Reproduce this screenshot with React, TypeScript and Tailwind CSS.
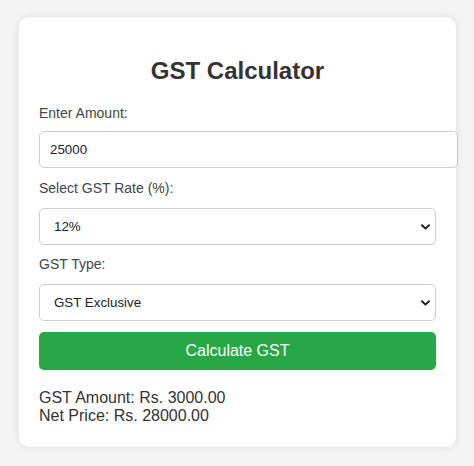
import React from "react";

function Chevron() {
  return (
    <svg
      className="pointer-events-none absolute right-[6px] top-1/2 -translate-y-1/2"
      width="9"
      height="6"
      viewBox="0 0 9 6"
      fill="none"
    >
      <path d="M1 1.2 L4.5 4.6 L8 1.2" stroke="#222" strokeWidth="2" strokeLinecap="round" strokeLinejoin="round" />
    </svg>
  );
}

export default function App() {
  return (
    <div
      className="min-h-[466px] bg-[#f4f4f4] pt-[17px] pl-[19px]"
      style={{ fontFamily: '"Liberation Sans", Arial, sans-serif' }}
    >
      <div className="w-[437px] rounded-[10px] bg-white p-5 pb-[22px] shadow-[0_0_10px_rgba(0,0,0,0.1)]">
        <h2 className="mt-[20px] mb-[20px] text-center text-[24px] font-bold leading-[normal] text-[#333]">
          GST Calculator
        </h2>
        <label className="mb-[10px] block text-[14px] leading-[normal] text-[#444]">Enter Amount:</label>
        <input
          readOnly
          value="25000"
          className="box-content block w-full rounded-[5px] border border-[#ccc] bg-white p-[10px] text-[13.333px] leading-[normal] text-[#222] outline-none"
        />
        <label className="mt-[12px] mb-[12px] block text-[14px] leading-[normal] text-[#444]">
          Select GST Rate (%):
        </label>
        <div className="relative">
          <select
            defaultValue="12"
            className="block h-[37px] w-full appearance-none rounded-[5px] border border-[#ccc] bg-white pl-[14px] text-[13.333px] leading-[normal] text-[#222] outline-none"
          >
            <option value="5">5%</option>
            <option value="12">12%</option>
            <option value="18">18%</option>
            <option value="28">28%</option>
          </select>
          <Chevron />
        </div>
        <label className="mt-[11px] mb-[12px] block text-[14px] leading-[normal] text-[#444]">GST Type:</label>
        <div className="relative">
          <select
            defaultValue="exclusive"
            className="block h-[37px] w-full appearance-none rounded-[5px] border border-[#ccc] bg-white pl-[14px] text-[13.333px] leading-[normal] text-[#222] outline-none"
          >
            <option value="exclusive">GST Exclusive</option>
            <option value="inclusive">GST Inclusive</option>
          </select>
          <Chevron />
        </div>
        <button className="mt-[11px] block h-[38px] w-full rounded-[5px] bg-[#28a745] text-[16px] leading-[normal] text-white">
          Calculate GST
        </button>
        <div className="mt-[19px] text-[16px] leading-[18px] text-[#333]">
          <div>GST Amount: Rs. 3000.00</div>
          <div>Net Price: Rs. 28000.00</div>
        </div>
      </div>
    </div>
  );
}
